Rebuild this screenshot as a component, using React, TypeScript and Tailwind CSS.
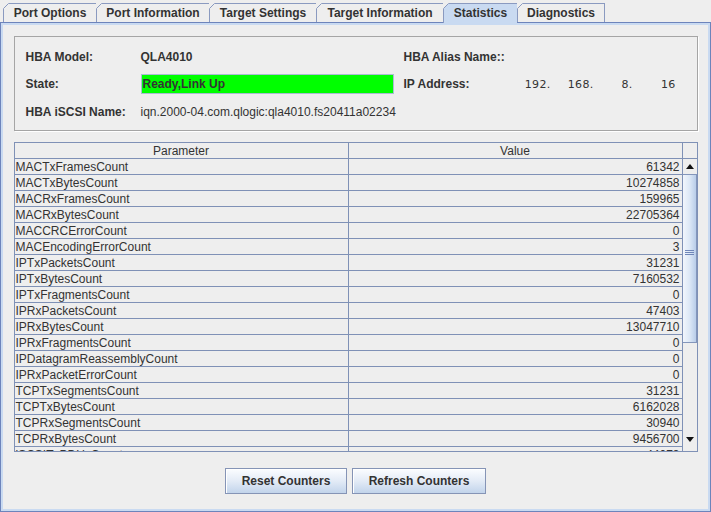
import React from "react";

const tabs = [
  { label: "Port Options", w: 93 },
  { label: "Port Information", w: 113 },
  { label: "Target Settings", w: 107 },
  { label: "Target Information", w: 127 },
  { label: "Statistics", w: 74, selected: true },
  { label: "Diagnostics", w: 88, last: true },
];

const rows: [string, string][] = [
  ["MACTxFramesCount", "61342"],
  ["MACTxBytesCount", "10274858"],
  ["MACRxFramesCount", "159965"],
  ["MACRxBytesCount", "22705364"],
  ["MACCRCErrorCount", "0"],
  ["MACEncodingErrorCount", "3"],
  ["IPTxPacketsCount", "31231"],
  ["IPTxBytesCount", "7160532"],
  ["IPTxFragmentsCount", "0"],
  ["IPRxPacketsCount", "47403"],
  ["IPRxBytesCount", "13047710"],
  ["IPRxFragmentsCount", "0"],
  ["IPDatagramReassemblyCount", "0"],
  ["IPRxPacketErrorCount", "0"],
  ["TCPTxSegmentsCount", "31231"],
  ["TCPTxBytesCount", "6162028"],
  ["TCPRxSegmentsCount", "30940"],
  ["TCPRxBytesCount", "9456700"],
  ["iSCSITxPDUsCount", "44073"],
];

function Tab({ label, w, selected, last }: { label: string; w: number; selected?: boolean; last?: boolean }) {
  return (
    <div
      className={
        "relative flex items-center justify-center border-l border-t border-[#8a9ac0] font-bold " +
        (last ? "border-r " : "") +
        (selected ? "z-10 mb-[-1px] h-[20px] bg-[#c9daf1] pb-[1px]" : "h-[19px] bg-[#eeeeee]")
      }
      style={{ width: w }}
    >
      <svg className="absolute left-[-1px] top-[-1px]" width="6" height="6" viewBox="0 0 6 6">
        <polygon points="0,0 6,0 0,6" fill="#eeeeee" />
        <line x1="0.5" y1="5.5" x2="5.5" y2="0.5" stroke="#8a9ac0" strokeWidth="1" />
      </svg>
      <span>{label}</span>
    </div>
  );
}

function Btn({ label, w }: { label: string; w: number }) {
  return (
    <div
      className="flex h-[26px] items-center justify-center border border-[#8594b6] bg-gradient-to-b from-[#fbfdff] via-[#e3ebf6] to-[#c2d4eb] font-bold shadow-[inset_1px_1px_0_#ffffff]"
      style={{ width: w }}
    >
      {label}
    </div>
  );
}

export default function App() {
  return (
    <div className="flex h-[512px] w-[711px] flex-col overflow-hidden bg-[#eeeeee] font-['Liberation_Sans',Arial,sans-serif] text-[12px] leading-none text-[#333333]">
      {/* tab strip */}
      <div className="flex h-[22px] shrink-0 items-end pl-[3px]">
        {tabs.map((t) => (
          <Tab key={t.label} {...t} />
        ))}
      </div>

      {/* content pane */}
      <div className="flex flex-1 flex-col border border-[#6d84bb]">
        <div className="flex flex-1 flex-col items-center border-2 border-[#c9daf1] bg-[#eeeeee]">
          {/* header panel */}
          <div className="mt-[11px] h-[95px] w-[684px] border border-[#a5a5a5] pl-[11px] pt-[10px] shadow-[1px_1px_0_#ffffff]">
            <div className="flex h-[20px] items-center">
              <div className="w-[115px] font-bold">HBA Model:</div>
              <div className="w-[253px] font-bold">QLA4010</div>
              <div className="ml-[10px] font-bold">HBA Alias Name::</div>
            </div>
            <div className="mt-[7px] flex h-[20px] items-center">
              <div className="w-[115px] font-bold">State:</div>
              <div className="flex h-[20px] w-[253px] items-center border border-[#a9bdd3] bg-[#00ff00] pl-[1px] font-bold">
                Ready,Link Up
              </div>
              <div className="ml-[10px] w-[104px] font-bold">IP Address:</div>
              <div className="flex font-['DejaVu_Sans',sans-serif] text-[11px] tracking-[0.3px] text-[#333333]">
                <span className="w-[43px] text-right">192.</span>
                <span className="w-[43px] text-right">168.</span>
                <span className="w-[39px] text-right">8.</span>
                <span className="w-[43px] text-right">16</span>
              </div>
            </div>
            <div className="mt-[8px] flex h-[20px] items-center">
              <div className="w-[115px] font-bold">HBA iSCSI Name:</div>
              <div>iqn.2000-04.com.qlogic:qla4010.fs20411a02234</div>
            </div>
          </div>

          {/* table */}
          <div className="mt-[11px] flex h-[310px] w-[684px] border border-[#7f91b6]">
            <div className="flex w-[668px] flex-col">
              <div className="flex h-[16px] shrink-0 border-b border-[#7f91b6]">
                <div className="flex w-[334px] items-center justify-center border-r border-[#7f91b6]">Parameter</div>
                <div className="flex w-[334px] items-center justify-center border-r border-[#7f91b6]">Value</div>
              </div>
              <div className="flex-1 overflow-hidden">
                {rows.map(([p, v]) => (
                  <div key={p} className="flex h-[16px] border-b border-[#7f91b6]">
                    <div className="flex w-[334px] items-center border-r border-[#7f91b6] pl-[1px]">{p}</div>
                    <div className="flex w-[334px] items-center justify-end border-r border-[#7f91b6] pr-[2px]">{v}</div>
                  </div>
                ))}
              </div>
            </div>
            {/* scrollbar */}
            <div className="flex w-[14px] flex-col">
              <div className="h-[16px] shrink-0 border-b border-[#7f91b6]" />
              <div className="flex h-[15px] shrink-0 items-center justify-center">
                <svg width="8" height="5" viewBox="0 0 8 5">
                  <polygon points="4,0 8,5 0,5" fill="#111111" />
                </svg>
              </div>
              <div className="relative flex h-[169px] shrink-0 items-center justify-center border border-l-0 border-[#8496bb] bg-gradient-to-r from-[#f2f6fc] via-[#dde8f6] to-[#b9cde9]">
                <svg width="9" height="6" viewBox="0 0 9 6" className="mt-[-12px]">
                  <line x1="0" y1="0.5" x2="9" y2="0.5" stroke="#6f86b8" />
                  <line x1="0" y1="2.5" x2="9" y2="2.5" stroke="#6f86b8" />
                  <line x1="0" y1="4.5" x2="9" y2="4.5" stroke="#6f86b8" />
                </svg>
              </div>
              <div className="flex-1" />
              <div className="mb-[4px] flex h-[16px] shrink-0 items-center justify-center">
                <svg width="8" height="5" viewBox="0 0 8 5">
                  <polygon points="0,0 8,0 4,5" fill="#111111" />
                </svg>
              </div>
            </div>
          </div>

          {/* buttons */}
          <div className="mt-[16px] flex gap-[5px]">
            <Btn label="Reset Counters" w={122} />
            <Btn label="Refresh Counters" w={134} />
          </div>
        </div>
      </div>
    </div>
  );
}
